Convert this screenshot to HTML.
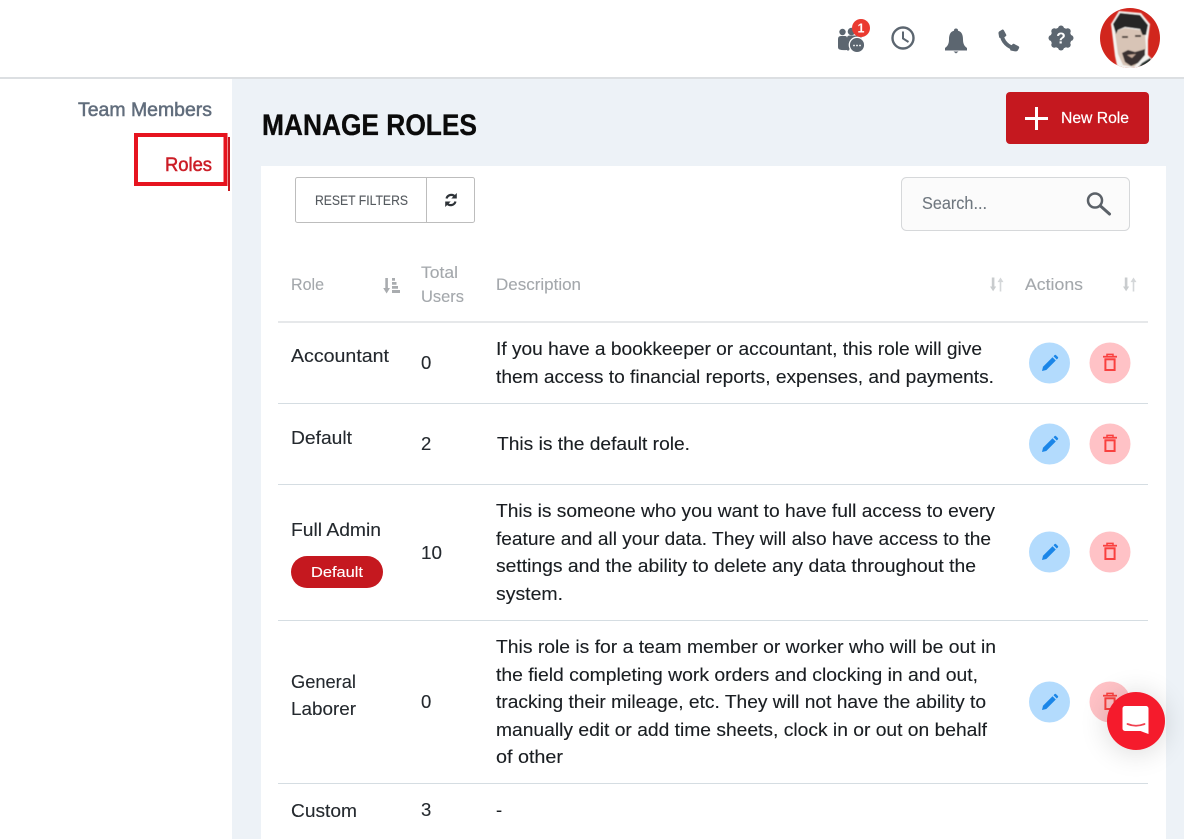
<!DOCTYPE html>
<html><head><meta charset="utf-8"><title>Manage Roles</title>
<style>
html,body{margin:0;padding:0;background:#fff;width:1184px;height:839px;overflow:hidden}
svg{display:block}
text{font-family:"Liberation Sans",Arial,sans-serif;font-size:18.5px;fill:#24292e;stroke:#24292e;stroke-width:.12}
.h{fill:#a4a8ac;stroke:#a4a8ac;font-size:17px}
.d{fill:#1a1e22;stroke:#1a1e22}
</style></head><body>
<svg width="1184" height="839" viewBox="0 0 1184 839" xmlns="http://www.w3.org/2000/svg">
<defs>
<filter id="sh" x="-60%" y="-60%" width="220%" height="220%"><feGaussianBlur stdDeviation="14"/></filter>
<filter id="b"><feGaussianBlur stdDeviation="0.6"/></filter>
<clipPath id="av"><circle cx="1130" cy="38" r="30"/></clipPath>
<g id="pen"><path d="M-7.500 8l1-4.300L3-5.800l3.300 3.300L-3.200 7z" fill="#1b86e8"/><path d="M4-6.800l1.100-1.100a1 1 0 0 1 1.400 0l1.900 1.900a1 1 0 0 1 0 1.400L7.300-3.500z" fill="#1b86e8"/></g>
<g id="del"><path d="M-7-6.300H7" fill="none" stroke="#f9403f" stroke-width="1.800"/><path d="M-3-6.500V-8.600H3V-6.500" fill="none" stroke="#f9403f" stroke-width="1.500"/><rect x="-4.600" y="-3.700" width="9.200" height="10.700" fill="none" stroke="#f9403f" stroke-width="2"/></g>
<g id="sort"><path d="M1.800 0h2.600v9H6.200L3.100 13.800 0 9h1.800z" fill="#c9ccce"/><path d="M9.700 14V4.600H7.500L10.500 0l3 4.600h-2.200V14z" fill="#d4d7d9"/></g>
</defs>

<rect width="1184" height="839" fill="#fff"/>
<rect x="232" y="78" width="952" height="761" fill="#edf2f7"/>
<rect x="261" y="166" width="905" height="673" fill="#fff"/>
<rect x="0" y="0" width="1184" height="77" fill="#fff"/>
<rect x="0" y="77" width="1184" height="2" fill="#dcdfe2"/>
<rect x="0" y="79" width="232" height="760" fill="#fff"/>

<!-- header icons -->
<g fill="#5c6670">
  <circle cx="842.500" cy="32" r="3.200"/><circle cx="851.500" cy="31.500" r="3.800"/><circle cx="858" cy="33" r="2.800"/>
  <path d="M838 39q0-3 3-3h4q2 0 2 2V50q-5 .5-7.500-.500Q838 49 838 47z"/>
  <path d="M847 38q0-2.500 3-2.500h7q4 0 5 3v4h-10l-3 8h-2z"/>
  <circle cx="857" cy="45" r="7.700" stroke="#fff" stroke-width="1.300"/>
</g>
<g fill="#fff"><circle cx="854" cy="45.500" r=".9"/><circle cx="857" cy="45.500" r=".9"/><circle cx="860" cy="45.500" r=".9"/></g>
<circle cx="861" cy="28" r="9" fill="#ea3a30"/>
<text x="861" y="32.500" text-anchor="middle" style="font-size:12.500px;font-weight:bold;fill:#fff;stroke:none">1</text>
<circle cx="903" cy="38" r="10.500" fill="none" stroke="#5c6670" stroke-width="2.400"/>
<path d="M903 31.500V38.500L908.500 42" fill="none" stroke="#5c6670" stroke-width="2"/>
<circle cx="956" cy="30.500" r="2" fill="#5c6670"/>
<path d="M956 30.500c-5.500 0-7 4-7 9 0 5-2 7-4 8.500V50.500h22V48c-2-1.500-4-3.500-4-8.500 0-5-1.500-9-7-9z" fill="#5c6670"/>
<path d="M953.500 51.500h5l-2.500 2z" fill="#5c6670"/>
<path d="M1001.500 33.500C1002 41.500 1008 47.500 1016 48.500" fill="none" stroke="#5c6670" stroke-width="4"/>
<path d="M998.500 33.500c-.2-1 .2-1.800 1-2.300l2.500-1.500c.8-.4 1.500 0 1.900.7l2.300 4.200c.3.700.1 1.300-.5 1.700l-3 2.300-3.500-1z" fill="#5c6670"/>
<path d="M1009.500 47.500l3-3.200c.5-.6 1.200-.7 1.800-.3l4.200 2.300c.7.500.9 1.200.5 2l-1.300 2.300c-.6.600-1.500.9-2.700.8l-4.500-.9z" fill="#5c6670"/>
<g fill="#5c6670">
  <circle cx="1061" cy="38" r="10.500"/>
  <circle cx="1061" cy="28.500" r="3"/><circle cx="1061" cy="47.500" r="3"/><circle cx="1051.500" cy="38" r="3"/><circle cx="1070.500" cy="38" r="3"/>
  <circle cx="1054.300" cy="31.300" r="3"/><circle cx="1067.700" cy="31.300" r="3"/><circle cx="1054.300" cy="44.700" r="3"/><circle cx="1067.700" cy="44.700" r="3"/>
</g>
<text x="1061" y="43.500" text-anchor="middle" style="font-size:15.500px;font-weight:bold;fill:#fff;stroke:none">?</text>

<!-- avatar -->
<g clip-path="url(#av)">
  <rect x="1098" y="6" width="64" height="64" fill="#d1261d"/>
  <g filter="url(#b)">
    <path d="M1111 24L1119 11L1141 13L1150 24L1148 40L1148 55L1153 60L1140 70H1118L1115 56L1113 40Z" fill="#f4f3f0"/>
    <path d="M1115 33L1119 30L1125 28L1140 30L1145 34L1146 48L1144 56L1134 67L1123 65L1118 54Z" fill="#d8c4b6"/>
    <path d="M1113 24L1120 13L1140 15L1148 25L1146 35L1142.500 35L1140 29L1125 27L1118 30L1116 34Z" fill="#272626"/>
    <path d="M1122 53L1128 50L1135 52L1142 50L1145 49L1145 55L1138 63L1131 66L1125 62Z" fill="#3a3230"/>
    <path d="M1127 55L1136 54L1132 58Z" fill="#c5a999"/>
    <path d="M1122 37h6M1135 36h6" stroke="#3a302d" stroke-width="1.800"/>
    <path d="M1142 63L1150 58L1158 70H1136Z" fill="#22302f"/>
  </g>
</g>

<!-- sidebar -->
<text x="78" y="116" textLength="134" lengthAdjust="spacingAndGlyphs" style="font-size:19px;fill:#616d7c;stroke:#616d7c;stroke-width:.5">Team Members</text>
<rect x="136" y="135" width="89.500" height="49" fill="none" stroke="#e6141f" stroke-width="4"/>
<rect x="228" y="137" width="2" height="54" fill="#c8171e"/>
<text x="165" y="171" textLength="47" lengthAdjust="spacingAndGlyphs" style="font-size:19px;fill:#cb1d26;stroke:#cb1d26;stroke-width:.5">Roles</text>

<!-- title -->
<text x="262" y="135" textLength="215" lengthAdjust="spacingAndGlyphs" style="font-size:29.500px;font-weight:bold;fill:#0b0b0b;stroke:#0b0b0b;stroke-width:.35">MANAGE ROLES</text>
<rect x="1006" y="92" width="143" height="52" rx="4" fill="#c5181f"/>
<path d="M1025 118.500H1048 M1036.500 107V130" stroke="#fff" stroke-width="3"/>
<text x="1061" y="123" textLength="68" lengthAdjust="spacingAndGlyphs" style="font-size:16px;fill:#fff;stroke:#fff;stroke-width:.2">New Role</text>

<!-- toolbar -->
<rect x="295.500" y="177.500" width="179" height="45" rx="2" fill="#fff" stroke="#bdbdbd"/>
<path d="M426.500 178V222" stroke="#bdbdbd"/>
<text x="315" y="205" textLength="93" lengthAdjust="spacingAndGlyphs" style="font-size:13.500px;fill:#555a5f;stroke:#555a5f">RESET FILTERS</text>
<path d="M446.500 198.500a5 5 0 0 1 8.500-2 M455.500 201.500a5 5 0 0 1-8.500 2" fill="none" stroke="#2e3338" stroke-width="2.200"/>
<path d="M456.800 193v5.500h-5.500zM445.200 207v-5.500h5.500z" fill="#2e3338"/>
<rect x="901.500" y="177.500" width="228" height="53" rx="5" fill="#fbfbfb" stroke="#d6d8da"/>
<text x="922" y="209" textLength="65" lengthAdjust="spacingAndGlyphs" style="font-size:17.500px;fill:#6f777f;stroke:#6f777f">Search...</text>
<circle cx="1095" cy="200.500" r="7" fill="none" stroke="#5b6168" stroke-width="2.500"/>
<path d="M1100.500 206L1109.500 214" stroke="#5b6168" stroke-width="3" stroke-linecap="round"/>

<!-- table head -->
<text class="h" x="291" y="290" textLength="33" lengthAdjust="spacingAndGlyphs">Role</text>
<path d="M385.300 278h2.600v10H390l-3.400 5.500-3.400-5.500h2.100z" fill="#a9acaf"/>
<path d="M392 278h3v2.800h-3zM392 282h4.500v2.800H392zM392 286h6v2.800h-6zM392 290h8v3h-8z" fill="#a9acaf"/>
<text class="h" x="421" y="278" textLength="37" lengthAdjust="spacingAndGlyphs">Total</text>
<text class="h" x="421" y="302" textLength="43" lengthAdjust="spacingAndGlyphs">Users</text>
<text class="h" x="496" y="290" textLength="85" lengthAdjust="spacingAndGlyphs">Description</text>
<use href="#sort" x="990" y="277.500"/>
<text class="h" x="1025" y="290" textLength="58" lengthAdjust="spacingAndGlyphs">Actions</text>
<use href="#sort" x="1123" y="277.500"/>

<!-- lines -->
<rect x="278" y="321" width="870" height="2" fill="#e6e8ea"/>
<rect x="278" y="403" width="870" height="1" fill="#d5dde2"/>
<rect x="278" y="484" width="870" height="1" fill="#d5dde2"/>
<rect x="278" y="620" width="870" height="1" fill="#d5dde2"/>
<rect x="278" y="783" width="870" height="1" fill="#d5dde2"/>

<!-- row 1 -->
<text x="291" y="362" textLength="98" lengthAdjust="spacingAndGlyphs">Accountant</text>
<text x="421" y="369">0</text>
<text class="d" x="496" y="355" textLength="486" lengthAdjust="spacingAndGlyphs">If you have a bookkeeper or accountant, this role will give</text>
<text class="d" x="496" y="383" textLength="498" lengthAdjust="spacingAndGlyphs">them access to financial reports, expenses, and payments.</text>
<!-- row 2 -->
<text x="291" y="444" textLength="61" lengthAdjust="spacingAndGlyphs">Default</text>
<text x="421" y="450">2</text>
<text class="d" x="497" y="450" textLength="193" lengthAdjust="spacingAndGlyphs">This is the default role.</text>
<!-- row 3 -->
<text x="291" y="536" textLength="90" lengthAdjust="spacingAndGlyphs">Full Admin</text>
<rect x="291" y="556" width="92" height="32" rx="16" fill="#c5181f"/>
<text x="311" y="577" textLength="52" lengthAdjust="spacingAndGlyphs" style="font-size:15px;fill:#fff;stroke:#fff">Default</text>
<text x="421" y="559" textLength="21" lengthAdjust="spacingAndGlyphs">10</text>
<text class="d" x="496" y="517" textLength="499" lengthAdjust="spacingAndGlyphs">This is someone who you want to have full access to every</text>
<text class="d" x="496" y="545" textLength="495" lengthAdjust="spacingAndGlyphs">feature and all your data. They will also have access to the</text>
<text class="d" x="496" y="572" textLength="480" lengthAdjust="spacingAndGlyphs">settings and the ability to delete any data throughout the</text>
<text class="d" x="496" y="600" textLength="67" lengthAdjust="spacingAndGlyphs">system.</text>
<!-- row 4 -->
<text x="291" y="688" textLength="65" lengthAdjust="spacingAndGlyphs">General</text>
<text x="291" y="715" textLength="65" lengthAdjust="spacingAndGlyphs">Laborer</text>
<text x="421" y="708">0</text>
<text class="d" x="496" y="653" textLength="500" lengthAdjust="spacingAndGlyphs">This role is for a team member or worker who will be out in</text>
<text class="d" x="496" y="681" textLength="482" lengthAdjust="spacingAndGlyphs">the field completing work orders and clocking in and out,</text>
<text class="d" x="496" y="708" textLength="490" lengthAdjust="spacingAndGlyphs">tracking their mileage, etc. They will not have the ability to</text>
<text class="d" x="496" y="736" textLength="491" lengthAdjust="spacingAndGlyphs">manually edit or add time sheets, clock in or out on behalf</text>
<text class="d" x="496" y="763" textLength="67" lengthAdjust="spacingAndGlyphs">of other</text>
<!-- row 5 -->
<text x="291" y="817" textLength="66" lengthAdjust="spacingAndGlyphs">Custom</text>
<text x="421" y="816">3</text>
<text class="d" x="496" y="816">-</text>

<!-- action buttons -->
<g fill="#b3dbfd">
<circle cx="1049.500" cy="363" r="20.500"/><circle cx="1049.500" cy="444" r="20.500"/><circle cx="1049.500" cy="552" r="20.500"/><circle cx="1049.500" cy="702" r="20.500"/>
</g>
<g fill="#ffc2c6">
<circle cx="1110" cy="363" r="20.500"/><circle cx="1110" cy="444" r="20.500"/><circle cx="1110" cy="552" r="20.500"/><circle cx="1110" cy="702" r="20.500"/>
</g>
<use href="#pen" x="1049.500" y="363"/><use href="#pen" x="1049.500" y="444"/><use href="#pen" x="1049.500" y="552"/><use href="#pen" x="1049.500" y="702"/>
<use href="#del" x="1110" y="363"/><use href="#del" x="1110" y="444"/><use href="#del" x="1110" y="552"/><use href="#del" x="1110" y="702"/>

<!-- chat launcher -->
<circle cx="1136" cy="723" r="30" fill="#000" opacity=".14" filter="url(#sh)"/>
<circle cx="1136" cy="721" r="29" fill="#f51b2c"/>
<path d="M1125 706h21a2.500 2.500 0 0 1 2.500 2.500v25.500l-8-3h-15.500a2.500 2.500 0 0 1-2.500-2.500v-20a2.500 2.500 0 0 1 2.500-2.500z" fill="#fff"/>
<path d="M1127.500 724q8.500 3.500 17 0" fill="none" stroke="#f0404f" stroke-width="1.800" stroke-linecap="round"/>
</svg>
</body></html>
